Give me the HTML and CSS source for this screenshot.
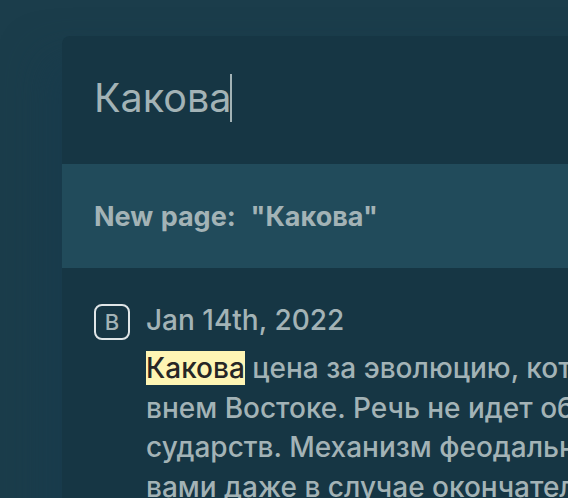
FILE: index.html
```html
<!DOCTYPE html>
<html lang="en">
<head>
    <meta charset="UTF-8">
    <title>Search</title>
    <link rel="stylesheet" href="styles.css">
</head>
<body>
    <div class="card">
        <div class="searchBox">
            <span class="query">Какова</span><span class="caret"></span>
        </div>
        <div class="newPage">New page:&nbsp; "Какова"</div>
        <div class="result">
            <div class="badge">B</div>
            <div class="resultBody">
                <div class="pageName">Jan 14th, 2022</div>
                <p class="excerpt"><mark class="hit">Какова</mark> цена за эволюцию, которая<br>внем Востоке. Речь не идет об отдельных<br>сударств. Механизм феодальной<br>вами даже в случае окончательного</p>
            </div>
        </div>
    </div>
</body>
</html>
```

FILE: styles.css
```css
html, body {
    height: 100%;
}
body {
    margin: 0;
    overflow: hidden;
    background: #1b3d4b;
    font-family: Inter, "Liberation Sans", sans-serif;
    color: #a3b3b6;
}

.card {
    width: 760px;
    height: 700px;
    margin: 36px 0 0 62px;
    border-radius: 8px;
    background: #163644;
    box-shadow: -20px 20px 40px rgba(22, 58, 78, 0.5);
}

.searchBox {
    box-sizing: border-box;
    display: flex;
    align-items: center;
    height: 128px;
    padding: 0 0 4px 32px;
}
.query {
    font-size: 39.5px;
    line-height: 48px;
}
.caret {
    width: 2px;
    height: 48px;
    margin-left: -1px;
    background: #a3b3b6;
}

.newPage {
    box-sizing: border-box;
    height: 104px;
    padding: 1px 0 0 32px;
    background: #214b5b;
    font-size: 27px;
    font-weight: 700;
    line-height: 103px;
    word-spacing: 1px;
    white-space: nowrap;
}

.result {
    display: flex;
    gap: 16px;
    padding: 36px 0 0 32px;
}
.badge {
    flex: none;
    box-sizing: border-box;
    width: 36px;
    height: 36px;
    border: 2px solid #dfe5e7;
    border-radius: 8px;
    font-size: 22px;
    font-weight: 500;
    line-height: 32px;
    text-align: center;
}
.pageName {
    font-size: 28px;
    font-weight: 500;
    line-height: 32px;
}
.excerpt {
    margin: 13px 0 0;
    font-size: 28px;
    font-weight: 500;
    line-height: 39.5px;
    white-space: nowrap;
}
.hit {
    background: #fef5b4;
    color: #262626;
}
```
